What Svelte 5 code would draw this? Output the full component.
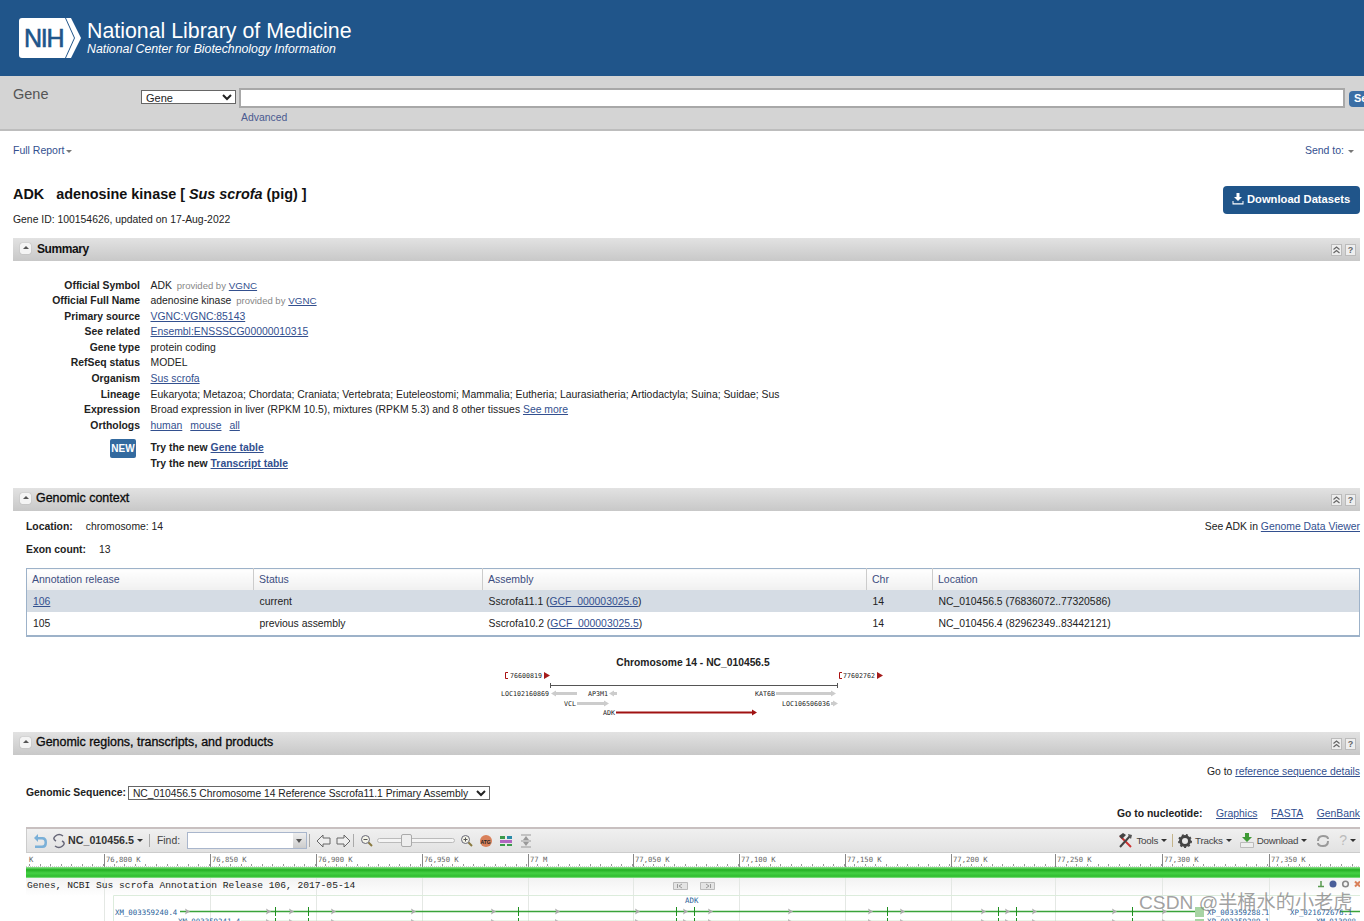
<script>
  // Gene record page: banner, search bar, summary, genomic context and the sequence viewer.
  const summary = [
    { k: "Official Symbol", type: "prov", v: "ADK" },
    { k: "Official Full Name", type: "prov", v: "adenosine kinase" },
    { k: "Primary source", type: "link", v: "VGNC:VGNC:85143" },
    { k: "See related", type: "link", v: "Ensembl:ENSSSCG00000010315" },
    { k: "Gene type", type: "text", v: "protein coding" },
    { k: "RefSeq status", type: "text", v: "MODEL" },
    { k: "Organism", type: "link", v: "Sus scrofa" },
    { k: "Lineage", type: "text", v: "Eukaryota; Metazoa; Chordata; Craniata; Vertebrata; Euteleostomi; Mammalia; Eutheria; Laurasiatheria; Artiodactyla; Suina; Suidae; Sus" },
  ];
  const ticks = [
    [104.5, "76,800 K"], [210.5, "76,850 K"], [316.5, "76,900 K"], [422.5, "76,950 K"],
    [528.5, "77 M"], [633.5, "77,050 K"], [739.5, "77,100 K"], [845.5, "77,150 K"],
    [951.5, "77,200 K"], [1055.5, "77,250 K"], [1162.5, "77,300 K"], [1269.5, "77,350 K"],
  ];
  const minor = Array.from({ length: 128 }, (_, i) => Math.round(29 + i * 10.58) + 0.5);
  const arrows = [187, 268, 291, 333, 413, 493, 557, 637, 685, 710, 790, 870, 902, 983, 1007, 1034, 1114, 1164];
  const exons = [275, 308, 518, 676, 694, 887, 998, 1016, 1132];
</script>

<div class="page">
  <header class="banner">
    <svg class="logo" width="64" height="41" viewBox="0 0 64 41">
      <path d="M3 0H46L55 20L46 40H3Q0 40 0 37V3Q0 0 3 0Z" fill="#fff" />
      <path d="M47 0H52L62 20L52 40H47L56 20Z" fill="#fff" />
      <text x="5" y="28.500" class="logo-text">NIH</text>
    </svg>
    <div class="banner-text">
      <div class="nlm">National Library of Medicine</div>
      <div class="ncbi">National Center for Biotechnology Information</div>
    </div>
  </header>

  <div class="searchbar">
    <div class="db-name">Gene</div>
    <select class="db-select"><option>Gene</option></select>
    <div class="search-col">
      <input class="term" type="text" />
      <a class="advanced" href="#adv">Advanced</a>
    </div>
    <span class="search-btn">Search</span>
  </div>

  <div class="report-bar">
    <span class="menu">Full Report<i class="caret"></i></span>
    <span class="menu">Send to:<i class="caret send"></i></span>
  </div>

  <div class="title-row">
    <div>
      <h1>ADK<span class="gap"></span>adenosine kinase [ <em>Sus scrofa</em> (pig) ]</h1>
      <div class="gene-id">Gene ID: 100154626, updated on 17-Aug-2022</div>
    </div>
    <span class="download">
      <svg width="12" height="12" viewBox="0 0 12 12"><path d="M4.500 0H7.500V4H10L6 8L2 4H4.500ZM0.500 8V11.500H11.500V8H10.500V10.300H1.500V8Z" fill="#fff" /></svg>
      Download Datasets
    </span>
  </div>

  <section class="bar summary-bar">
    <span class="toggle"></span><h2 class="squeezed">Summary</h2>
    <span class="bar-tools">
      <span class="tool"><svg width="9" height="10" viewBox="0 0 9 10"><path d="M1.500 4.500L4.500 2L7.500 4.500M1.500 8L4.500 5.500L7.500 8" fill="none" stroke="#666" stroke-width="1.200" /></svg></span>
      <span class="tool">?</span>
    </span>
  </section>

  <div class="summary">
    {#each summary as row}
      <div class="label">{row.k}</div>
      <div>
        {#if row.type === "link"}<a href="#s">{row.v}</a>
        {:else}{row.v}{/if}
        {#if row.type === "prov"}<span class="prov">provided by</span> <a class="prov-link" href="#v">VGNC</a>{/if}
      </div>
    {/each}
    <div class="label">Expression</div>
    <div>Broad expression in liver (RPKM 10.5), mixtures (RPKM 5.3) and 8 other tissues <a href="#m">See more</a></div>
    <div class="label">Orthologs</div>
    <div class="orthologs"><a href="#h">human</a><a href="#mo">mouse</a><a href="#a">all</a></div>
    <div class="label new-cell"><span class="new">NEW</span></div>
    <div class="try">
      <div>Try the new <a href="#g">Gene table</a></div>
      <div>Try the new <a href="#t">Transcript table</a></div>
    </div>
  </div>

  <section class="bar context-bar">
    <span class="toggle"></span><h2>Genomic context</h2>
    <span class="bar-tools">
      <span class="tool"><svg width="9" height="10" viewBox="0 0 9 10"><path d="M1.500 4.500L4.500 2L7.500 4.500M1.500 8L4.500 5.500L7.500 8" fill="none" stroke="#666" stroke-width="1.200" /></svg></span>
      <span class="tool">?</span>
    </span>
  </section>

  <div class="context">
    <div class="loc-row">
      <div><b>Location:</b><span class="loc-val">chromosome: 14</span></div>
      <div>See ADK in <a href="#gdv">Genome Data Viewer</a></div>
    </div>
    <div class="exon"><b>Exon count:</b><span class="exon-val">13</span></div>

    <table>
      <thead>
        <tr><th class="c1">Annotation release</th><th class="c2">Status</th><th class="c3">Assembly</th><th class="c4">Chr</th><th>Location</th></tr>
      </thead>
      <tbody>
        <tr class="current">
          <td><a href="#106">106</a></td><td>current</td><td>Sscrofa11.1 (<a href="#gcf">GCF_000003025.6</a>)</td><td>14</td><td>NC_010456.5 (76836072..77320586)</td>
        </tr>
        <tr>
          <td>105</td><td>previous assembly</td><td>Sscrofa10.2 (<a href="#gcf2">GCF_000003025.5</a>)</td><td>14</td><td>NC_010456.4 (82962349..83442121)</td>
        </tr>
      </tbody>
    </table>
  </div>

  <div class="chromo">
    <div class="chromo-title">Chromosome 14 - NC_010456.5</div>
    <svg class="chromo-map" width="420" height="56" viewBox="0 16 420 56">
      <g class="map-text">
        <text x="30" y="28">76600819</text>
        <text x="363" y="28">77602762</text>
        <text x="21" y="45.500">LOC102160869</text>
        <text x="108" y="45.500">AP3M1</text>
        <text x="275" y="45.500">KAT6B</text>
        <text x="84" y="55.500">VCL</text>
        <text x="302" y="55.500">LOC106506036</text>
        <text x="123" y="64.500">ADK</text>
      </g>
      <path d="M28 22.500H25.500V28.500H28M362 22.500H359.500V28.500H362" fill="none" stroke="#a11" />
      <path d="M64 22L70 25.500L64 29ZM397 22L403 25.500L397 29Z" fill="#a51c1c" />
      <path d="M70 35.500H358M70.500 33V38M357.500 33V38" stroke="#555" fill="none" />
      <g fill="#ccc">
        <path d="M71 43.500L76 40.500V42H97V45H76V46.500Z" />
        <path d="M129 43.500L134 40.500V42H137V45H134V46.500Z" />
        <path d="M296 42H351V40.500L356 43.500L351 46.500V45H296Z" />
        <path d="M97 52H124V50.500L129 53.500L124 56.500V55H97Z" />
        <path d="M351 52H353V50.500L358 53.500L353 56.500V55H351Z" />
      </g>
      <path d="M136 61.500H272V59.500L277 62.500L272 65.500V63.500H136Z" fill="#a01212" />
    </svg>
  </div>

  <section class="bar regions-bar">
    <span class="toggle"></span><h2>Genomic regions, transcripts, and products</h2>
    <span class="bar-tools">
      <span class="tool"><svg width="9" height="10" viewBox="0 0 9 10"><path d="M1.500 4.500L4.500 2L7.500 4.500M1.500 8L4.500 5.500L7.500 8" fill="none" stroke="#666" stroke-width="1.200" /></svg></span>
      <span class="tool">?</span>
    </span>
  </section>

  <div class="goto">Go to <a href="#ref">reference sequence details</a></div>
  <div class="seq-row">
    <b>Genomic Sequence:</b>
    <select class="seq-select"><option>NC_010456.5 Chromosome 14 Reference Sscrofa11.1 Primary Assembly</option></select>
  </div>
  <div class="nuc-row">
    <b>Go to nucleotide:</b>
    <a href="#graphics">Graphics</a><a href="#fasta">FASTA</a><a href="#gb">GenBank</a>
  </div>

  <div class="viewer">
    <div class="toolbar">
      <svg width="14" height="16" viewBox="0 0 14 16"><path d="M5 1L1 5L5 9V6.500H9Q11.500 6.500 11.500 9.500T9 12.500H2V15H9.500Q14 15 14 9.500T9.500 4H5Z" fill="#7ab0d8" /></svg>
      <svg class="ml" width="12" height="16" viewBox="0 0 12 16"><path d="M10 3Q6 0 2.500 3T3 8M2 13Q6 16 9.500 13T9 8" fill="none" stroke="#667" stroke-width="1.500" /></svg>
      <b class="seq-id">NC_010456.5</b><i class="caret dark"></i>
      <span class="sep first"></span>
      <span class="find">Find:</span>
      <span class="find-box"><span class="find-arrow"></span></span>
      <span class="sep tight"></span>
      <svg class="ml" width="15" height="14" viewBox="0 0 15 14"><path d="M7 1L1 7L7 13V10H14V4H7Z" fill="#eee" stroke="#666" /></svg>
      <svg class="ml2" width="15" height="14" viewBox="0 0 15 14"><path d="M8 1L14 7L8 13V10H1V4H8Z" fill="#eee" stroke="#666" /></svg>
      <span class="sep tight"></span>
      <svg class="ml" width="13" height="13" viewBox="0 0 13 13"><circle cx="5.500" cy="5.500" r="4" fill="#f4f4e8" stroke="#667" /><path d="M8.500 8.500L12 12" stroke="#8a7a40" stroke-width="2" /><path d="M3.500 5.500H7.500" stroke="#555" /></svg>
      <span class="slider"><span class="thumb"></span></span>
      <svg class="ml3" width="13" height="13" viewBox="0 0 13 13"><circle cx="5.500" cy="5.500" r="4" fill="#f4f4e8" stroke="#667" /><path d="M8.500 8.500L12 12" stroke="#8a7a40" stroke-width="2" /><path d="M3.500 5.500H7.500M5.500 3.500V7.500" stroke="#555" /></svg>
      <svg class="ml" width="14" height="14" viewBox="0 0 14 14"><circle cx="7" cy="7" r="6" fill="#d9805a" /><text x="1.500" y="10" class="atg">ATG</text></svg>
      <svg class="ml" width="14" height="12" viewBox="0 0 14 12"><path d="M1 1H6V4H1Z" fill="#3a9a4a" /><path d="M8 1H13V4H8Z" fill="#2a8aa8" /><path d="M1 5H13V8H1Z" fill="#b066c0" /><path d="M1 9H6V11H1ZM8 9H13V11H8Z" fill="#3a9a4a" /></svg>
      <svg class="ml4" width="10" height="14" viewBox="0 0 10 14"><path d="M0 7H10M0 1H10M0 13H10" stroke="#999" /><path d="M5 2L2 6H8ZM5 12L2 8H8Z" fill="#999" /></svg>

      <span class="spacer"></span>

      <svg width="15" height="15" viewBox="0 0 15 15"><path d="M2 3L13 14" stroke="#c33" stroke-width="2" /><path d="M12 3L2 14" stroke="#444" stroke-width="2" /><path d="M1 3L5 0L8 2L4 6Z" fill="#444" /><path d="M10 1L14 2L13 6L11 4Z" fill="#555" /></svg>
      <span class="tb">Tools</span><i class="caret dark"></i>
      <span class="sep gold"></span>
      <svg width="14" height="14" viewBox="0 0 14 14"><circle cx="7" cy="7" r="4.500" fill="none" stroke="#444" stroke-width="3" /><circle cx="7" cy="7" r="6.200" fill="none" stroke="#444" stroke-width="1.600" stroke-dasharray="2 2.200" /></svg>
      <span class="tb">Tracks</span><i class="caret dark"></i>
      <svg class="ml8" width="14" height="15" viewBox="0 0 14 15"><path d="M5 0H9V4H12L7 9L2 4H5Z" fill="#3f9a35" /><path d="M0.500 9.500H13.500V14.500H0.500Z" fill="#eee" stroke="#bbb" /></svg>
      <span class="tb">Download</span><i class="caret dark"></i>
      <svg class="ml10" width="12" height="12" viewBox="0 0 12 12"><path d="M1 6Q1 1 6 1T11 4M11 6Q11 11 6 11T1 8" fill="none" stroke="#999" stroke-width="2" /></svg>
      <span class="help">?</span><i class="caret dark"></i>
    </div>

    <svg class="tracks" width="1334" height="69" viewBox="26 852 1334 69">
      <rect x="26" y="852" width="1334" height="14" fill="#fff" />
      {#each minor as x}
        <path d="M{x} 863V865" stroke="#999" />
      {/each}
      <path d="M26 865.500H1360" stroke="#ccc" stroke-dasharray="1 1" />
      <text x="29" y="861" class="ruler">K</text>

      <defs>
        <linearGradient id="seqbar" x1="0" y1="0" x2="0" y2="1">
          <stop offset="0" stop-color="#8fe58f" />
          <stop offset="0.250" stop-color="#22ae22" />
          <stop offset="0.550" stop-color="#44d044" />
          <stop offset="0.850" stop-color="#2fbd2f" />
          <stop offset="1" stop-color="#90e890" />
        </linearGradient>
        <linearGradient id="trackhead" x1="0" y1="0" x2="0" y2="1">
          <stop offset="0" stop-color="#f2f2f2" />
          <stop offset="1" stop-color="#fff" />
        </linearGradient>
      </defs>
      <rect x="26" y="866" width="1334" height="11" fill="url(#seqbar)" />
      <rect x="26" y="877" width="1334" height="18" fill="url(#trackhead)" />
      {#each ticks as [x, label]}
        <path d="M{x} 877V921" stroke="#e4e8e4" />
        <path d="M{x} 853V866" stroke="#888" />
        <text x={x + 1.500} y="861" class="ruler">{label}</text>
      {/each}
      <text x="27" y="887" class="track-title">Genes, NCBI Sus scrofa Annotation Release 106, 2017-05-14</text>

      <path d="M113.500 921V894.500H1360" fill="none" stroke="#dcecdc" />

      <g fill="#e4e4e4" stroke="#bbb">
        <path d="M673.500 881.500H687.500V888.500H673.500ZM700.500 881.500H714.500V888.500H700.500Z" />
      </g>
      <path d="M677.500 883V887M682 883L679 885L682 887M710.500 883V887M706 883L709 885L706 887" fill="none" stroke="#999" />
      <text x="685" y="902" class="blue">ADK</text>

      <text x="115" y="914" class="blue">XM_003359240.4</text>
      <path d="M180 910.500H1195" stroke="#3aa33a" stroke-width="1.500" />
      <path d="M1340 910.500H1360" stroke="#3aa33a" stroke-width="1.500" />
      <path d="M241 920.500H1195" stroke="#a6d8a6" stroke-width="1.500" />
      <text x="178" y="923" class="blue">XM_003359241.4</text>
      {#each exons as x}
        <path d="M{x + 0.500} 906V915M{x + 0.500} 917V921" stroke="#1f8f1f" />
      {/each}
      {#each arrows as x}
        <path d="M{x - 2} 907.500L{x + 3} 910.500L{x - 2} 913.500L{x - 1} 910.500Z" fill="#aaa" />
        <path d="M{x - 2} 918L{x + 3} 921H{x - 2}Z" fill="#bbb" />
      {/each}
      <rect x="1195" y="906" width="9" height="10" fill="#a8d4a4" />
      <rect x="1195" y="918" width="9" height="3" fill="#a8d4a4" />
      <text x="1207" y="914" class="blue">XP_003359288.1</text>
      <text x="1290" y="914" class="blue">XP_021672676.1</text>
      <text x="1207" y="923" class="blue">XP_003359289.1</text>
      <text x="1316" y="923" class="blue">XM_013988</text>

      <path d="M1321 880V885M1318 885.500H1324" stroke="#5a9a50" stroke-width="1.500" />
      <circle cx="1333" cy="883" r="3.500" fill="#4a5f9a" />
      <circle cx="1345.500" cy="883" r="2.800" fill="none" stroke="#888" stroke-width="1.600" />
      <path d="M1355 880.500L1360 885.500M1360 880.500L1355 885.500" stroke="#d9805a" stroke-width="2" />
    </svg>
  </div>

  <div class="watermark">CSDN @半桶水的小老虎</div>
</div>

<style>
  :global(body) {
    margin: 0;
    background: #fff;
  }
  .page {
    position: relative;
    width: 1364px;
    height: 921px;
    overflow: hidden;
    font-family: "Liberation Sans", Arial, sans-serif;
    font-size: 10.400px;
    line-height: 15px;
    color: #222;
  }
  a {
    color: #33508f;
    text-decoration: underline;
  }
  .banner {
    height: 76px;
    background: #20558a;
    display: flex;
    padding: 18px 0 0 19px;
    box-sizing: border-box;
    color: #fff;
  }
  .logo {
    flex: none;
  }
  .logo-text {
    font: 400 25px "Liberation Sans", Arial, sans-serif;
    fill: #20558a;
    stroke: #20558a;
    stroke-width: 0.600px;
    letter-spacing: -1.200px;
  }
  .banner-text {
    margin-left: 4px;
    margin-top: 2px;
  }
  .nlm {
    font-size: 21.350px;
    line-height: 22px;
  }
  .ncbi {
    font-size: 12.300px;
    font-style: italic;
    line-height: 15px;
  }
  .searchbar {
    height: 55px;
    box-sizing: border-box;
    background: #d4d4d4;
    border-bottom: 2px solid #bdbdbd;
    display: flex;
    padding: 12px 0 0 13px;
    align-items: flex-start;
  }
  .db-name {
    flex: none;
    width: 128px;
    font-size: 14.500px;
    color: #555;
    margin-top: -1px;
  }
  .db-select {
    flex: none;
    width: 95px;
    height: 14px;
    margin: 2px 3px 0 0;
    padding: 0;
    font: 11px "Liberation Sans", Arial, sans-serif;
    background: #fff;
    border: 1px solid #666;
    border-radius: 0;
    color: #222;
  }
  .search-col {
    flex: none;
    width: 1106px;
    display: flex;
    flex-direction: column;
  }
  .term {
    box-sizing: border-box;
    width: 100%;
    height: 20px;
    margin: 0;
    border: 2px solid #a8a8a8;
    background: #fff;
    padding: 0;
  }
  .advanced {
    margin: 2px 0 0 2px;
    font-size: 10.400px;
    color: #4a5a90;
    text-decoration: none;
  }
  .search-btn {
    flex: none;
    margin: 3px 0 0 4px;
    height: 16px;
    padding: 0 8px 0 5px;
    background: #3a6ea5;
    color: #fff;
    font-weight: 700;
    font-size: 11px;
    border-radius: 4px;
  }
  .report-bar {
    display: flex;
    justify-content: space-between;
    padding: 12px 10px 0 13px;
    height: 26px;
  }
  .menu {
    color: #33508f;
    font-size: 10.500px;
  }
  .caret {
    display: inline-block;
    border: 3px solid transparent;
    border-top: 3px solid #777;
    border-bottom: 0;
    margin-left: 2px;
    vertical-align: middle;
  }
  .caret.send {
    margin-left: 4px;
  }
  .caret.dark {
    border-top-color: #333;
    margin-left: 3px;
    flex: none;
  }
  .title-row {
    display: flex;
    justify-content: space-between;
    padding: 15px 4px 0 13px;
    height: 54px;
  }
  h1 {
    margin: 0;
    font-size: 14.400px;
    line-height: 20px;
    font-weight: 700;
    color: #111;
  }
  .gap {
    display: inline-block;
    width: 12px;
  }
  .gene-id {
    margin-top: 8px;
    font-size: 10.400px;
  }
  .download {
    align-self: flex-start;
    margin-top: 2px;
    display: flex;
    align-items: center;
    gap: 3px;
    width: 137px;
    height: 28px;
    box-sizing: border-box;
    padding: 0 0 2px 9px;
    background: #20558a;
    border-radius: 4px;
    color: #fff;
    font-weight: 700;
    font-size: 11.200px;
    white-space: nowrap;
  }
  .bar {
    margin: 0 4px 0 13px;
    height: 23px;
    display: flex;
    align-items: center;
    background: linear-gradient(#e2e2e2, #c8c8c8);
  }
  .toggle {
    position: relative;
    width: 11px;
    height: 11px;
    margin: -3px 5px 0 7px;
    background: #f4f4f4;
    border-radius: 2px;
    box-shadow: 0 0 1px #888;
    flex: none;
  }
  .toggle::after {
    content: "";
    position: absolute;
    left: 2.500px;
    top: 3px;
    border: 3px solid transparent;
    border-bottom: 3px solid #555;
    border-top: 0;
  }
  h2 {
    margin: -2px 0 0;
    font-size: 12.450px;
    font-weight: 400;
    -webkit-text-stroke: 0.300px #000;
    color: #111;
  }
  h2.squeezed {
    margin: 0 0 0 1px;
    font-size: 12px;
    font-weight: 700;
    -webkit-text-stroke: 0;
    letter-spacing: -0.400px;
  }
  .bar-tools {
    margin-left: auto;
    margin-right: 4px;
    display: flex;
    gap: 3px;
  }
  .tool {
    display: flex;
    justify-content: center;
    width: 11px;
    height: 12px;
    background: #eee;
    border: 1px solid #bbb;
    box-sizing: border-box;
    font-size: 9px;
    font-weight: 700;
    line-height: 11px;
    color: #666;
  }
  .summary {
    display: grid;
    grid-template-columns: 140px 1fr;
    column-gap: 10.500px;
    grid-auto-rows: 15.600px;
    padding-top: 16.500px;
    height: 227px;
    box-sizing: border-box;
    line-height: 15.600px;
  }
  .label {
    text-align: right;
    font-weight: 700;
  }
  .prov {
    color: #888;
    margin-left: 2px;
    font-size: 9.500px;
  }
  .prov-link {
    font-size: 9.800px;
  }
  .orthologs {
    display: flex;
    gap: 8px;
  }
  .new-cell {
    margin-top: 6px;
  }
  .new {
    display: inline-block;
    width: 26px;
    height: 19px;
    margin-right: 4px;
    background: #336a9f;
    color: #fff;
    border-radius: 2px;
    text-align: center;
    line-height: 19px;
    font-size: 10px;
  }
  .try {
    margin-top: 7px;
    font-weight: 700;
  }
  .context {
    padding: 8px 4px 0 26px;
    height: 125px;
    box-sizing: border-box;
  }
  .loc-row {
    display: flex;
    justify-content: space-between;
  }
  .loc-val {
    margin-left: 13px;
  }
  .exon {
    margin-top: 8px;
  }
  .exon-val {
    margin-left: 13px;
  }
  table {
    margin-top: 11px;
    width: 100%;
    height: 69px;
    border-collapse: collapse;
    table-layout: fixed;
    border: 1px solid #9db2c9;
    border-bottom-width: 2px;
  }
  th {
    font-weight: 400;
    font-size: 10.500px;
    text-align: left;
    height: 21px;
    padding: 0 5px;
    color: #3c4d80;
    background: linear-gradient(#fff, #f0f0f0);
    border-right: 1px solid #ccc;
  }
  th:last-child {
    border-right: 0;
  }
  .c1 {
    width: 216px;
  }
  .c2 {
    width: 218px;
  }
  .c3 {
    width: 373px;
  }
  .c4 {
    width: 55px;
  }
  td {
    padding: 0 6px;
  }
  .current {
    background: #d5dce4;
  }
  .chromo {
    height: 96px;
    box-sizing: border-box;
    padding-top: 20px;
    display: flex;
    flex-direction: column;
    align-items: center;
  }
  .chromo-title {
    font-weight: 700;
    font-size: 10.300px;
    line-height: 14px;
    margin-left: 22px;
  }
  .chromo-map {
    margin: -4px 0 0 16px;
    flex: none;
  }
  .map-text text {
    font: 6.650px "DejaVu Sans Mono", monospace;
    fill: #222;
  }
  .goto {
    text-align: right;
    padding: 9px 4px 0 0;
  }
  .seq-row {
    display: flex;
    align-items: center;
    gap: 2px;
    margin: 6px 0 0 26px;
  }
  .seq-select {
    width: 362px;
    height: 14px;
    padding: 0;
    font: 10.300px "Liberation Sans", Arial, sans-serif;
    background: #fff;
    border: 1px solid #666;
    border-radius: 0;
    color: #222;
  }
  .nuc-row {
    display: flex;
    justify-content: flex-end;
    gap: 13.500px;
    padding: 6px 4px 0 0;
  }
  .viewer {
    margin: 6px 4px 0 26px;
    border-top: 2px solid #c8c0c0;
  }
  .toolbar {
    height: 23px;
    display: flex;
    align-items: center;
    padding: 0 4px 0 6px;
    background: linear-gradient(#f0f0f0, #e2e2e2);
    border-left: 1px solid #ccc;
    border-bottom: 1px solid #ccc;
    font-size: 9.800px;
    color: #444;
  }
  .ml {
    margin-left: 6px;
    flex: none;
  }
  .ml2 {
    margin-left: 5px;
    flex: none;
  }
  .ml3 {
    margin-left: 5px;
    flex: none;
  }
  .ml4 {
    margin-left: 8px;
    flex: none;
  }
  .ml8 {
    margin-left: 8px;
    flex: none;
  }
  .ml10 {
    margin-left: 10px;
    flex: none;
  }
  .seq-id {
    color: #333;
    margin-left: 3px;
    font-size: 10.700px;
  }
  .sep {
    width: 1px;
    height: 13px;
    background: #aaa;
    flex: none;
  }
  .sep.first {
    margin: 0 7px 0 6px;
  }
  .sep.tight {
    margin: 0 0 0 2px;
  }
  .sep.gold {
    background: #c4b48a;
    margin: 0 5px 0 5px;
  }
  .find {
    color: #444;
    font-size: 10.400px;
  }
  .find-box {
    position: relative;
    width: 120px;
    height: 17px;
    margin-left: 7px;
    background: #fff;
    border: 1px solid #a9b6cc;
    box-sizing: border-box;
    flex: none;
  }
  .find-arrow {
    position: absolute;
    right: 0;
    top: 0;
    bottom: 0;
    width: 13px;
    background: linear-gradient(#eee, #ccc);
  }
  .find-arrow::after {
    content: "";
    position: absolute;
    left: 3px;
    top: 6px;
    border: 3.500px solid transparent;
    border-top: 4px solid #555;
    border-bottom: 0;
  }
  .slider {
    position: relative;
    width: 76px;
    height: 3px;
    margin-left: 4px;
    background: #f4f4f4;
    border: 1px solid #bbb;
    border-radius: 3px;
    flex: none;
  }
  .thumb {
    position: absolute;
    left: 23px;
    top: -5px;
    width: 9px;
    height: 11px;
    background: #eee;
    border: 1px solid #aaa;
    border-radius: 2px;
  }
  .atg {
    font: 700 5px "Liberation Sans", sans-serif;
    fill: #222;
  }
  .spacer {
    flex: 1;
  }
  .tb {
    margin-left: 3px;
    letter-spacing: -0.250px;
  }
  .help {
    margin-left: 10px;
    font-size: 14px;
    color: #bbb;
  }
  .tracks {
    display: block;
    background: #fff;
  }
  .ruler {
    font: 7.200px "DejaVu Sans Mono", monospace;
    fill: #666;
  }
  .track-title {
    font: 9.600px "Liberation Mono", monospace;
    fill: #222;
  }
  .blue {
    font: 7.400px "DejaVu Sans Mono", monospace;
    fill: #2a5f9a;
  }
  .watermark {
    position: absolute;
    left: 1139px;
    top: 891px;
    font-family: "Liberation Sans", "Noto Sans CJK SC", sans-serif;
    font-size: 19.200px;
    line-height: 24px;
    color: rgba(120, 120, 120, 0.7);
    white-space: nowrap;
  }
</style>
